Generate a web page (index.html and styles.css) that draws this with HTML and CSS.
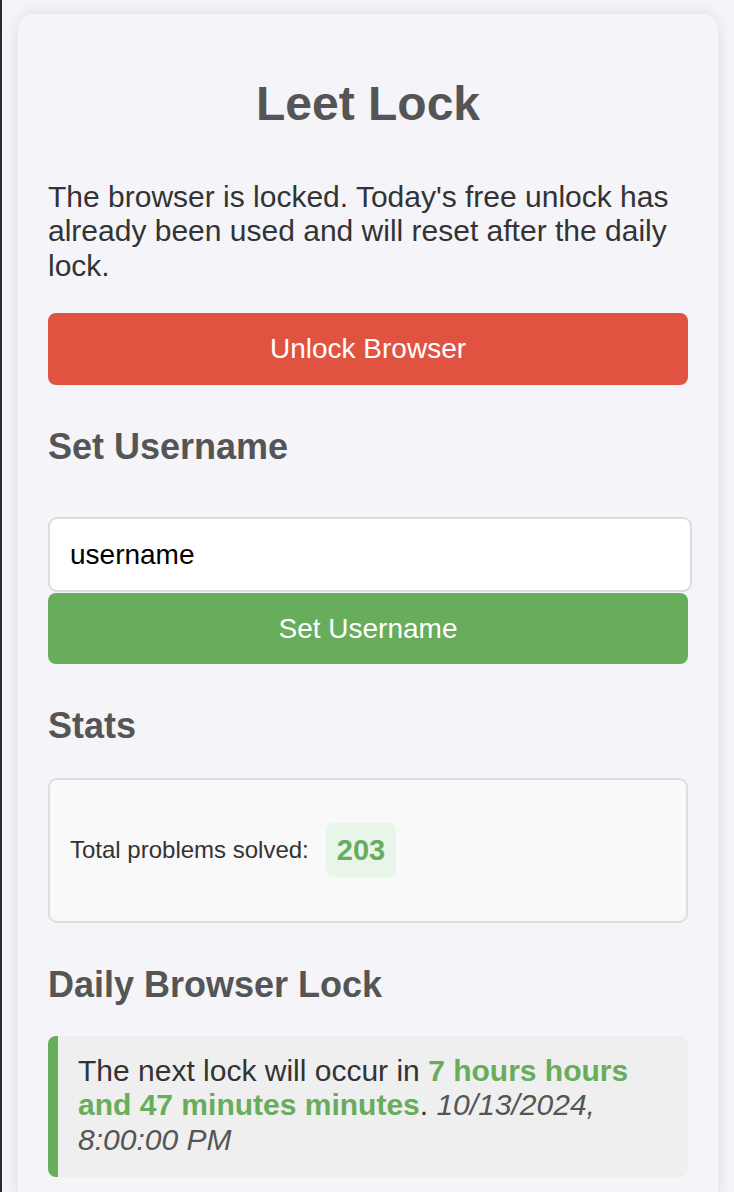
FILE: index.html
```html
<!DOCTYPE html>
<html lang="en">
<head>
<meta charset="utf-8">
<title>Leet Lock</title>
<link rel="stylesheet" href="styles.css">
</head>
<body>
<div class="edge"></div>
<main class="card">
  <h1 class="title">Leet Lock</h1>
  <p class="status">The browser is locked. Today's free unlock has already been used and will reset after the daily lock.</p>
  <button class="btn btn-red" type="button">Unlock Browser</button>

  <h2 class="section">Set Username</h2>
  <input class="field" type="text" value="username">
  <button class="btn btn-green" type="button">Set Username</button>

  <h2 class="section">Stats</h2>
  <div class="stats">
    <span class="stats-label">Total problems solved:</span>
    <span class="badge">203</span>
  </div>

  <h2 class="section">Daily Browser Lock</h2>
  <div class="lockinfo">The next lock will occur in <strong class="hl">7 hours hours and 47 minutes minutes</strong>. <em class="date">10/13/2024, 8:00:00 PM</em></div>
</main>
</body>
</html>
```
FILE: styles.css
```css
html, body {
  margin: 0;
  padding: 0;
  background: #f4f4f9;
  font-family: "Liberation Sans", Arial, Helvetica, sans-serif;
  color: #333;
  overflow: hidden;
}
body {
  display: flex;
  height: 1192px;
}
.edge {
  width: 2px;
  flex: 0 0 2px;
  background: #2c2c2e;
}
.card {
  margin: 14px 0 0 16px;
  width: 700px;
  box-sizing: border-box;
  padding: 30px;
  background: #f4f4f9;
  border-radius: 16px;
  box-shadow: 0 0 16px rgba(0, 0, 0, 0.10);
  align-self: flex-start;
}
.title {
  margin: 32px 0 0;
  font-size: 48px;
  line-height: 55px;
  font-weight: bold;
  text-align: center;
  color: #555;
}
.status {
  margin: 49px 0 30px;
  font-size: 30px;
  line-height: 34.3px;
  color: #333;
}
.btn {
  display: block;
  width: 100%;
  height: 72px;
  border: none;
  border-radius: 8px;
  color: #fff;
  font-family: "Liberation Sans", Arial, Helvetica, sans-serif;
  font-size: 28px;
  padding: 0;
}
.btn-red { background: #e05341; }
.btn-green { background: #67ad5b; height: 71px; }
.section {
  margin: 41px 0 31px;
  font-size: 36px;
  line-height: 41.4px;
  font-weight: bold;
  color: #555;
}
.field {
  display: block;
  box-sizing: border-box;
  width: calc(100% + 4px);
  height: 75px;
  margin: 50px 0 1px;
  padding: 0 20px;
  border: 2px solid #dcdcdc;
  border-radius: 9px;
  background: #fff;
  font-family: "Liberation Sans", Arial, Helvetica, sans-serif;
  font-size: 28px;
  color: #000;
  outline: none;
}
.stats {
  display: flex;
  align-items: center;
  gap: 17px;
  padding: 43.5px 20px;
  background: #f9f9f9;
  border: 2px solid #dddddd;
  border-radius: 9px;
}
.stats-label {
  font-size: 24px;
  color: #333;
}
.badge {
  padding: 10px 11px;
  background: #e8f5e9;
  border-radius: 7px;
  color: #67ad5b;
  font-weight: bold;
  font-size: 29px;
  line-height: 34px;
}
.lockinfo {
  padding: 18px 20px 20px 20px;
  background: #efeff0;
  border-left: 10px solid #67ad5b;
  border-radius: 8px;
  font-size: 30px;
  line-height: 34.3px;
  color: #333;
}
.hl {
  color: #67ad5b;
  font-weight: bold;
}
.date {
  font-style: italic;
  color: #555;
}
```
